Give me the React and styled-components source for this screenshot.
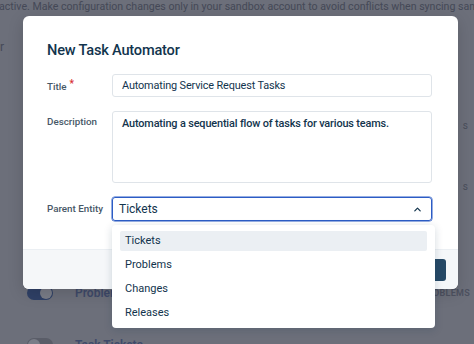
import styled, { createGlobalStyle } from 'styled-components';

const GlobalStyle = createGlobalStyle`
  html, body {
    margin: 0;
    padding: 0;
    background: #6c6f7a;
    font-family: Roboto, "Noto Sans", "Liberation Sans", sans-serif;
  }
`;

const StyledPage = styled.div`
  position: relative;
  width: 474px;
  height: 344px;
  overflow: hidden;
  background: #6c6f7a;
  color: #454957;
`;

const StyledBanner = styled.div`
  font-size: 10.6px;
  white-space: nowrap;
  line-height: 14px;
  margin-left: -1px;
`;

const StyledSideLabel = styled.div`
  font-size: 12px;
  padding-top: 26px;
`;

const StyledRightMarks = styled.div`
  display: flex;
  flex-direction: column;
  align-items: flex-end;
  gap: 50px;
  padding: 66px 6px 0 0;
  font-size: 10px;
  color: #4a4e5c;
`;

const StyledRow = styled.div`
  display: flex;
  align-items: center;
  gap: 22px;
  padding-left: 27px;
  margin-top: ${(p) => p.$top}px;
  font-size: 12px;
  font-weight: 600;
  color: #3f4a6a;
`;

const StyledToggle = styled.div`
  width: 26px;
  height: 14px;
  border-radius: 7px;
  background: ${(p) => (p.$on ? '#2f4066' : '#5a5d68')};
  position: relative;
  &::after {
    content: '';
    position: absolute;
    top: 1px;
    left: ${(p) => (p.$on ? '13px' : '1px')};
    width: 12px;
    height: 12px;
    border-radius: 50%;
    background: #7a7d88;
  }
`;

const StyledRowEnd = styled.span`
  margin-left: auto;
  padding-right: 4px;
  font-size: 9px;
  letter-spacing: 0.3px;
  color: #4d5160;
`;

const StyledModal = styled.div`
  position: absolute;
  left: 23px;
  top: 16px;
  width: 435px;
  background: #fff;
  border-radius: 6px;
  overflow: hidden;
  box-shadow: 0 4px 16px rgba(0, 0, 0, 0.15);
`;

const StyledTitle = styled.h2`
  margin: 0;
  padding: 26px 24px 15px;
  font-size: 14.6px;
  line-height: 17px;
  letter-spacing: -0.2px;
  font-weight: 500;
  color: #12344d;
`;

const StyledForm = styled.div`
  display: flex;
  flex-direction: column;
  gap: 14px;
  padding: 0 26px 28px 24px;
`;

const StyledField = styled.div`
  display: grid;
  grid-template-columns: 65px 1fr;
  align-items: ${(p) => (p.$top ? 'start' : 'center')};
`;

const StyledLabel = styled.label`
  font-size: 9.8px;
  font-weight: 500;
  color: #475867;
  padding-top: ${(p) => (p.$top ? '5px' : '0')};
  padding-bottom: ${(p) => (p.$top ? '0' : '2px')};
`;

const StyledRequired = styled.span`
  color: #d72d30;
  margin-left: 3px;
  font-size: 10px;
  vertical-align: 3px;
`;

const StyledInput = styled.div`
  box-sizing: border-box;
  height: ${(p) => p.$h}px;
  border: 1px solid ${(p) => (p.$focus ? '#2c5cc5' : '#dfe4e9')};
  box-shadow: ${(p) => (p.$focus ? '0 0 0 0.5px #2c5cc5' : 'none')};
  border-radius: 3px;
  padding: ${(p) => (p.$multi ? '5px 9px' : '0 9px')};
  padding-left: ${(p) => (p.$focus ? '6px' : '9px')};
  display: flex;
  align-items: ${(p) => (p.$multi ? 'flex-start' : 'center')};
  justify-content: space-between;
  font-size: ${(p) => (p.$focus ? '12px' : '10.9px')};
  letter-spacing: ${(p) => (p.$focus ? '0' : '-0.15px')};
  font-weight: ${(p) => (p.$multi ? 500 : 400)};
  color: #12344d;
`;

const StyledFooter = styled.div`
  display: flex;
  justify-content: flex-end;
  padding: 9px 12px 8px;
  background: #f5f7f9;
  border-top: 1px solid #ebeff3;
`;

const StyledButton = styled.button`
  height: 22px;
  padding: 0 14px;
  border: none;
  border-radius: 3px;
  background: #264966;
  color: #fff;
  font-family: inherit;
  font-size: 11px;
  font-weight: 600;
`;

const StyledMenu = styled.ul`
  position: absolute;
  left: 112px;
  top: 225px;
  width: 323px;
  box-sizing: border-box;
  margin: 0;
  padding: 6px 8px 5px;
  list-style: none;
  background: #fff;
  border-radius: 4px;
  box-shadow: 0 2px 8px rgba(18, 52, 77, 0.18);
  display: flex;
  flex-direction: column;
  gap: 4px;
`;

const StyledOption = styled.li`
  height: 20px;
  line-height: 20px;
  padding: 0 5px;
  border-radius: 2px;
  font-size: 11px;
  color: #12344d;
  background: ${(p) => (p.$active ? '#ebeff3' : 'transparent')};
`;

const options = ['Tickets', 'Problems', 'Changes', 'Releases'];

export default function App() {
  return (
    <StyledPage>
      <GlobalStyle />
      <StyledBanner>
        active. Make configuration changes only in your sandbox account to avoid conflicts when syncing sandbox
      </StyledBanner>
      <StyledSideLabel>r</StyledSideLabel>
      <StyledRightMarks>
        <span>s</span>
        <span>s</span>
      </StyledRightMarks>
      <StyledRow $top={94}>
        <StyledToggle $on />
        <span>Problems</span>
        <StyledRowEnd>PROBLEMS</StyledRowEnd>
      </StyledRow>
      <StyledRow $top={38}>
        <StyledToggle />
        <span>Task Tickets</span>
      </StyledRow>

      <StyledModal>
        <StyledTitle>New Task Automator</StyledTitle>
        <StyledForm>
          <StyledField>
            <StyledLabel>
              Title<StyledRequired>*</StyledRequired>
            </StyledLabel>
            <StyledInput $h={23}>Automating Service Request Tasks</StyledInput>
          </StyledField>
          <StyledField $top>
            <StyledLabel $top>Description</StyledLabel>
            <StyledInput $h={72} $multi>
              Automating a sequential flow of tasks for various teams.
            </StyledInput>
          </StyledField>
          <StyledField>
            <StyledLabel>Parent Entity</StyledLabel>
            <StyledInput $h={24} $focus>
              <span>Tickets</span>
              <svg width="9" height="9" viewBox="0 0 10 10">
                <path d="M2 6.5 L5 3.5 L8 6.5" fill="none" stroke="#12344d" strokeWidth="1.4" strokeLinecap="round" strokeLinejoin="round" />
              </svg>
            </StyledInput>
          </StyledField>
        </StyledForm>
        <StyledFooter>
          <StyledButton>Save</StyledButton>
        </StyledFooter>
      </StyledModal>

      <StyledMenu>
        {options.map((o, i) => (
          <StyledOption key={o} $active={i === 0}>
            {o}
          </StyledOption>
        ))}
      </StyledMenu>
    </StyledPage>
  );
}
